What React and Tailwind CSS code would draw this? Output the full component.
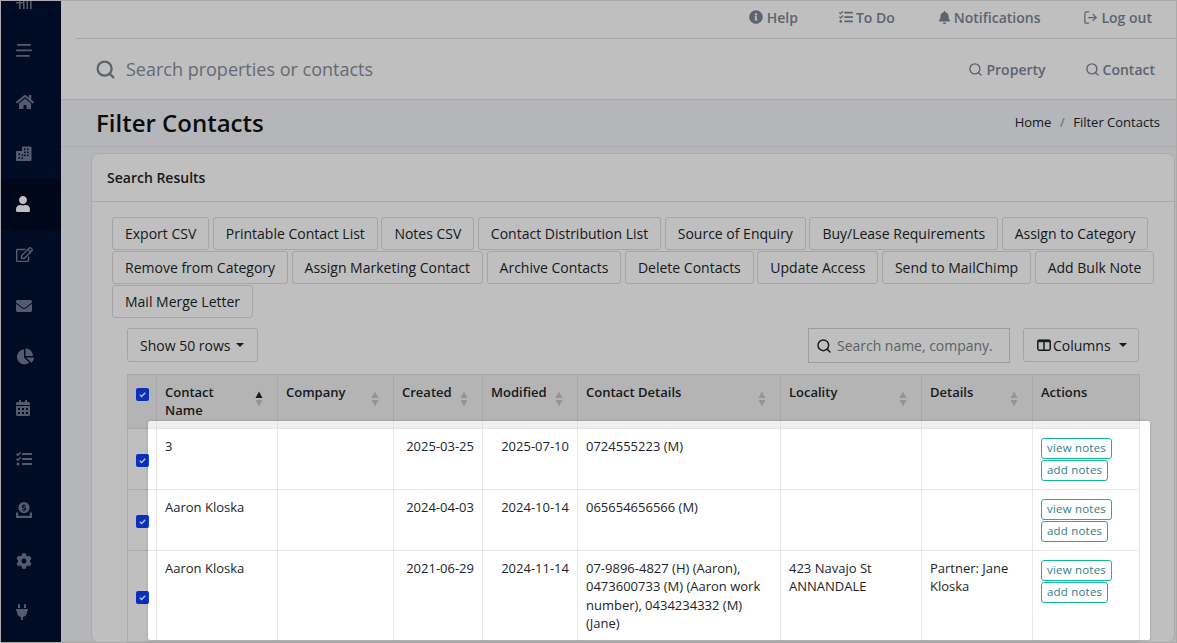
import React from 'react';
import { FaHome, FaUser, FaRegEdit, FaEnvelope, FaChartPie, FaCalendarAlt, FaTasks, FaCog, FaPlug, FaInfoCircle, FaBell } from 'react-icons/fa';
import { Search, LogOut } from 'lucide-react';

const FONT = { fontFamily: '"Open Sans", "Noto Sans", sans-serif' };

const BuildingIcon = () => (
  <svg width="16" height="16" viewBox="0 0 16 16" fill="currentColor">
    <path d="M6 2.5 a1 1 0 0 1 1-1h7.5a1 1 0 0 1 1 1V15a1 1 0 0 1-1 1H1a1 1 0 0 1-1-1V7a1 1 0 0 1 1-1h5z" />
    <g fill="#01102f">
      <rect x="8" y="3.5" width="1.6" height="1.6" /><rect x="11" y="3.5" width="1.6" height="1.6" />
      <rect x="8" y="6.5" width="1.6" height="1.6" /><rect x="11" y="6.5" width="1.6" height="1.6" />
      <rect x="2.5" y="8.5" width="1.6" height="1.6" /><rect x="5.5" y="9.5" width="1.6" height="1.6" />
      <rect x="8" y="9.5" width="1.6" height="1.6" /><rect x="11" y="9.5" width="1.6" height="1.6" />
      <rect x="2.5" y="12" width="1.6" height="1.6" /><rect x="5.5" y="12.5" width="1.6" height="1.6" />
    </g>
  </svg>
);

const CoinIcon = () => (
  <svg width="16" height="16" viewBox="0 0 16 16" fill="currentColor">
    <path fillRule="evenodd" d="M8 0a5.6 5.6 0 1 1 0 11.2A5.6 5.6 0 0 1 8 0zm.5 2.2h-1v.9c-1 .2-1.6.8-1.6 1.6 0 1 .9 1.3 1.9 1.6.8.2 1 .4 1 .7 0 .4-.4.6-.9.6-.6 0-1-.3-1.1-.7l-1 .2c.1.8.8 1.3 1.7 1.4v.9h1v-.9c1-.2 1.6-.8 1.6-1.6 0-1.1-1-1.4-1.9-1.7-.8-.2-1-.4-1-.6 0-.4.4-.6.9-.6s.9.2 1 .6l1-.2c-.2-.7-.8-1.2-1.6-1.3z" />
    <path d="M0 10.5h2.2v3.3h11.6v-3.3H16V15a1 1 0 0 1-1 1H1a1 1 0 0 1-1-1z" />
  </svg>
);

const BarsIcon = () => (
  <svg width="16" height="13" viewBox="0 0 16 13" fill="currentColor">
    <rect x="1" y="0" width="14" height="1.8" rx="0.9" />
    <rect x="0" y="5.5" width="16" height="1.8" rx="0.9" />
    <rect x="0" y="11" width="14" height="1.8" rx="0.9" />
  </svg>
);

const ColumnsIcon = () => (
  <svg width="14" height="12" viewBox="0 0 14 12" fill="none" stroke="currentColor">
    <rect x="0.8" y="1.2" width="12.4" height="10" rx="1.4" strokeWidth="1.5" />
    <path d="M7 1.5v9.5" strokeWidth="1.5" />
    <path d="M1 2h12" strokeWidth="2.4" />
  </svg>
);

const NAV = [
  { id: 'menu', icon: <BarsIcon /> },
  { id: 'home', icon: <FaHome size={18} /> },
  { id: 'property', icon: <BuildingIcon /> },
  { id: 'contact', icon: <FaUser size={16} className="-ml-[1px]" />, active: true },
  { id: 'notes', icon: <FaRegEdit size={17} /> },
  { id: 'mail', icon: <FaEnvelope size={16} /> },
  { id: 'reports', icon: <FaChartPie size={17} className="ml-[1px]" /> },
  { id: 'calendar', icon: <FaCalendarAlt size={16} className="-ml-[1px]" /> },
  { id: 'tasks', icon: <FaTasks size={16} /> },
  { id: 'sales', icon: <CoinIcon /> },
  { id: 'settings', icon: <FaCog size={16} /> },
  { id: 'plug', icon: <FaPlug size={16} className="-ml-[2px]" /> },
];

const ACTIONS = [
  'Export CSV', 'Printable Contact List', 'Notes CSV', 'Contact Distribution List', 'Source of Enquiry', 'Buy/Lease Requirements', 'Assign to Category',
  'Remove from Category', 'Assign Marketing Contact', 'Archive Contacts', 'Delete Contacts', 'Update Access', 'Send to MailChimp', 'Add Bulk Note',
  'Mail Merge Letter',
];

const COLUMNS = [
  { label: 'Contact Name', width: 121, sorted: true },
  { label: 'Company', width: 116 },
  { label: 'Created', width: 89 },
  { label: 'Modified', width: 95 },
  { label: 'Contact Details', width: 203 },
  { label: 'Locality', width: 141 },
  { label: 'Details', width: 111 },
  { label: 'Actions', width: 107, noSort: true },
];

const ROWS = [
  { name: '3', created: '2025-03-25', modified: '2025-07-10', contact: '0724555223 (M)' },
  { name: 'Aaron Kloska', created: '2024-04-03', modified: '2024-10-14', contact: '065654656566 (M)' },
  {
    name: 'Aaron Kloska', created: '2021-06-29', modified: '2024-11-14',
    contact: '07-9896-4827 (H) (Aaron), 0473600733 (M) (Aaron work number), 0434234332 (M) (Jane)',
    locality: '423 Navajo St ANNANDALE', details: 'Partner: Jane Kloska',
  },
];

const Check = () => (
  <span className="inline-flex w-[13px] h-[13px] items-center justify-center rounded-[2px] bg-[#0d41fb] align-middle">
    <svg width="9" height="9" viewBox="0 0 10 10" fill="none" stroke="white" strokeWidth="1.6"><path d="M2 5.2l2.1 2.1L8 3" /></svg>
  </span>
);

const SortCaret = ({ active }) => (
  <svg width="8" height="16" viewBox="0 0 8 16" className="text-[#c6c6c6]" fill="currentColor">
    <path d="M4 0.5L7.5 7H0.5z" className={active ? 'text-[#212529]' : ''} />
    <path d="M0.5 9H7.5L4 15.5z" />
  </svg>
);

const Caret = () => <span className="w-0 h-0 border-x-[4px] border-x-transparent border-t-[4px] border-t-current" />;

const TopLink = ({ icon, children, className = '' }) => (
  <span className={`flex items-center font-semibold text-[#7d8596] ${className}`}>{icon}{children}</span>
);

export default function App() {
  return (
    <div style={FONT} className="relative h-screen overflow-hidden border border-[#aaaaaa] flex bg-[#f1f3f7] text-[#212529]">
      {/* Sidebar */}
      <aside className="w-[60px] shrink-0 bg-[#011030] text-[#6f7a95] flex flex-col overflow-hidden">
        <div className="h-[25px] shrink-0 pl-[15px]">
          <svg width="18" height="18" viewBox="0 0 18 18" fill="currentColor" className="-mt-[10px]"><path d="M3 8h1.6v10H3zM0 11h7v1.4H0zM7 6h1.6v12H7zM10.5 6h1.6v12h-1.6zM14 6h1.6v12H14z" /></svg>
        </div>
        {NAV.map(item => (
          <div key={item.id} className={`h-[51px] shrink-0 flex items-center pl-[15px] pb-[2px] ${item.active ? 'bg-[#010a24] text-white' : ''}`}>
            {item.icon}
          </div>
        ))}
      </aside>

      <main className="flex-1 min-w-0">
        {/* Top links */}
        <div className="bg-white pl-[15px]">
          <div className="h-[38px] pb-[5px] flex items-center justify-end border-b border-[#dcdcdc] text-[14px] pr-[24px]">
            <TopLink icon={<FaInfoCircle size={14} />} className="mr-[41px] gap-[4px]">Help</TopLink>
            <TopLink icon={<FaTasks size={14} />} className="mr-[43px] gap-[3px]">To Do</TopLink>
            <TopLink icon={<FaBell size={13} />} className="mr-[43px] gap-[3px]">Notifications</TopLink>
            <TopLink icon={<LogOut size={15} strokeWidth={2} />} className="gap-[3px]">Log out</TopLink>
          </div>
        </div>
        <div className="bg-white h-[61px] flex items-center border-b border-[#dfe1e5] pl-[34px] pr-[21px]">
          <Search size={21} strokeWidth={2.6} className="text-[#7d8596]" />
          <span className="ml-[10px] text-[18px] text-[#888e99]">Search properties or contacts</span>
          <div className="ml-auto flex items-center gap-[40px] text-[14px]">
            <TopLink icon={<Search size={15} strokeWidth={2.2} />} className="translate-x-[1px] gap-[3px]">Property</TopLink>
            <TopLink icon={<Search size={15} strokeWidth={2.2} />} className="gap-[3px]">Contact</TopLink>
          </div>
        </div>

        {/* Title */}
        <div className="h-[47px] flex items-center justify-between border-b border-[#e4e6ea] pl-[35px] pr-[16px]">
          <h1 className="text-[24px] font-semibold text-[#111]">Filter Contacts</h1>
          <div className="text-[13px] flex items-center">
            <span>Home</span><span className="mx-[8.5px] text-[#8a8a8a]">/</span><span>Filter Contacts</span>
          </div>
        </div>

        {/* Card */}
        <section className="ml-[30px] mr-[1px] mt-[6px] bg-white border border-[#e4e4e4] rounded-[8px]">
          <div className="h-[48px] flex items-center px-[15px] border-b border-[#e4e4e4] text-[14px] font-semibold">Search Results</div>
          <div className="pt-[15px] pl-[20px] pr-[20px]">
            <div className="flex flex-wrap gap-x-[3.5px] gap-y-[1px] -mr-[4px]">
              {ACTIONS.map(a => (
                <button key={a} className="h-[33px] px-[12px] border border-[#dcdcdc] rounded-[3px] text-[14px] text-[#212529]">{a}</button>
              ))}
            </div>
            <div className="mt-[10px] mx-[15px]">
              <div className="flex items-start justify-between">
                <button className="h-[34px] w-[131px] pl-[12px] border border-[#dcdcdc] rounded-[3px] text-[14px] flex items-center gap-[6px]">
                  Show 50 rows <Caret />
                </button>
                <div className="flex items-start gap-[13px]">
                  <div className="w-[202px] h-[35px] border border-[#cfd2d6] flex items-center pl-[7px] gap-[5px] text-[14px] tracking-[-0.02px] text-[#7c7f85]">
                    <Search size={16} strokeWidth={2.2} className="text-[#212529]" />
                    Search name, company.
                  </div>
                  <button className="h-[34px] w-[116px] border border-[#dcdcdc] rounded-[3px] text-[14px] flex items-center pl-[13px]">
                    <ColumnsIcon /><span className="ml-[2px] mr-[8px]">Columns</span><Caret />
                  </button>
                </div>
              </div>

              <table className="mt-[11px] w-[1012px] table-fixed border-collapse text-[13px] leading-[18.3px]">
                <colgroup>
                  <col className="w-[29px]" />
                  {COLUMNS.map(c => <col key={c.label} style={{ width: c.width }} />)}
                </colgroup>
                <thead>
                  <tr className="bg-[#f0f0f0] h-[54px]">
                    <th className="border border-[#e2e2e2] align-top text-center pt-[9px] font-normal"><Check /></th>
                    {COLUMNS.map(c => (
                      <th key={c.label} className="border border-[#e2e2e2] align-top text-left font-semibold pl-[8px] pr-[14px] pt-[8px]">
                        <div className="flex items-start justify-between">
                          <span className={c.sorted ? 'max-w-[70px]' : ''}>{c.label}</span>
                          {!c.noSort && <span className="pt-[8px]"><SortCaret active={c.sorted} /></span>}
                        </div>
                      </th>
                    ))}
                  </tr>
                </thead>
                <tbody>
                  {ROWS.map((r, i) => (
                    <tr key={i} className="align-top">
                      <td className="border border-[#e6e6e6] text-center align-middle"><Check /></td>
                      <td className="border border-[#e6e6e6] pl-[8px] pr-[6px] pt-[8px] pb-[9px]">{r.name}</td>
                      <td className="border border-[#e6e6e6]"></td>
                      <td className="border border-[#e6e6e6] text-right pr-[8px] pt-[8px]">{r.created}</td>
                      <td className="border border-[#e6e6e6] text-right pr-[8px] pt-[8px]">{r.modified}</td>
                      <td className="border border-[#e6e6e6] pl-[8px] pr-[6px] pt-[8px] pb-[9px]">{r.contact}</td>
                      <td className="border border-[#e6e6e6] pl-[8px] pr-[6px] pt-[8px]">{r.locality}</td>
                      <td className="border border-[#e6e6e6] pl-[8px] pr-[6px] pt-[8px]">{r.details}</td>
                      <td className="border border-[#e6e6e6] pl-[8px] pt-[9px] pb-[8px]">
                        <div className="flex flex-col items-start gap-[1px]">
                          <button className="h-[21px] px-[5px] border border-[#12b89a] rounded-[3px] text-[11.5px] tracking-[0.2px] text-[#2f7d8a]">view notes</button>
                          <button className="h-[21px] px-[5px] border border-[#12b89a] rounded-[3px] text-[11.5px] tracking-[0.2px] text-[#2f7d8a]">add notes</button>
                        </div>
                      </td>
                    </tr>
                  ))}
                </tbody>
              </table>
            </div>
          </div>
        </section>
      </main>

      {/* Tour spotlight */}
      <div className="absolute left-[147px] top-[420px] w-[1002px] h-[219px] rounded-[2px] pointer-events-none shadow-[0_0_0_9999px_rgba(0,0,0,0.25),0_0_3px_rgba(0,0,0,0.2)]" />
    </div>
  );
}
